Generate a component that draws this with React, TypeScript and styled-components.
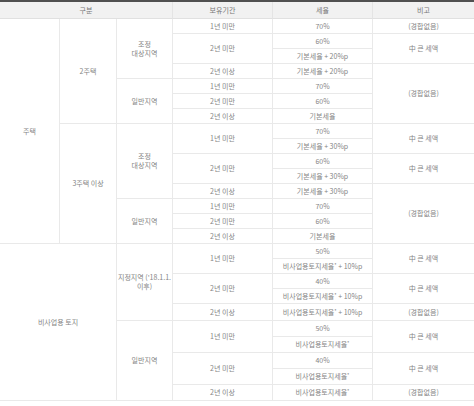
import React from "react";
import styled, { createGlobalStyle } from "styled-components";

const Global = createGlobalStyle`
  html, body { margin: 0; padding: 0; background: #ffffff; }
  body { font-family: "Noto Sans CJK KR", "Noto Sans", sans-serif; }
`;

const Table = styled.table`
  width: 474px;
  border-collapse: separate;
  border-spacing: 0;
  table-layout: fixed;
  border-top: 2px solid #505050;
  font-family: "Noto Sans CJK KR", "Noto Sans", sans-serif;
  font-size: 7px;
  color: #858585;
`;

const Row = styled.tr<{ $h?: number }>`
  height: ${(p) => p.$h ?? 15}px;
`;

const Th = styled.th<{ $first?: boolean }>`
  background: #f1f1f1;
  font-weight: 400;
  color: #777777;
  padding: 0;
  text-align: center;
  vertical-align: middle;
  line-height: 9px;
  border-bottom: 1px solid #e0e0e0;
  border-left: ${(p) => (p.$first ? "none" : "1px solid #e4e4e4")};
`;

const Td = styled.td<{ $first?: boolean }>`
  padding: 0;
  text-align: center;
  vertical-align: middle;
  line-height: 9px;
  white-space: nowrap;
  border-bottom: 1px solid #e9e9e9;
  border-left: ${(p) => (p.$first ? "none" : "1px solid #e9e9e9")};
`;

const Sup = styled.sup`
  font-size: 5px;
  line-height: 0;
  vertical-align: 2px;
`;

const Land = ({ plus }: { plus?: boolean }) => (
  <>
    비사업용토지세율<Sup>*</Sup>
    {plus ? " + 10%p" : ""}
  </>
);

const BIG = "中 큰 세액";
const NONE = "(경합없음)";

export default function App() {
  return (
    <>
      <Global />
      <Table>
        <colgroup>
          <col style={{ width: 59 }} />
          <col style={{ width: 57 }} />
          <col style={{ width: 56 }} />
          <col style={{ width: 100 }} />
          <col style={{ width: 100 }} />
          <col />
        </colgroup>
        <thead>
          <Row $h={17}>
            <Th $first colSpan={3}>구분</Th>
            <Th>보유기간</Th>
            <Th>세율</Th>
            <Th>비고</Th>
          </Row>
        </thead>
        <tbody>
          <Row>
            <Td $first rowSpan={15}>주택</Td>
            <Td rowSpan={7}>2주택</Td>
            <Td rowSpan={4}>조정<br />대상지역</Td>
            <Td>1년 미만</Td>
            <Td>70%</Td>
            <Td>{NONE}</Td>
          </Row>
          <Row>
            <Td rowSpan={2}>2년 미만</Td>
            <Td>60%</Td>
            <Td rowSpan={2}>{BIG}</Td>
          </Row>
          <Row>
            <Td>기본세율 + 20%p</Td>
          </Row>
          <Row>
            <Td>2년 이상</Td>
            <Td>기본세율 + 20%p</Td>
            <Td rowSpan={4}>{NONE}</Td>
          </Row>
          <Row>
            <Td rowSpan={3}>일반지역</Td>
            <Td>1년 미만</Td>
            <Td>70%</Td>
          </Row>
          <Row>
            <Td>2년 미만</Td>
            <Td>60%</Td>
          </Row>
          <Row>
            <Td>2년 이상</Td>
            <Td>기본세율</Td>
          </Row>
          <Row>
            <Td rowSpan={8}>3주택 이상</Td>
            <Td rowSpan={5}>조정<br />대상지역</Td>
            <Td rowSpan={2}>1년 미만</Td>
            <Td>70%</Td>
            <Td rowSpan={2}>{BIG}</Td>
          </Row>
          <Row>
            <Td>기본세율 + 30%p</Td>
          </Row>
          <Row>
            <Td rowSpan={2}>2년 미만</Td>
            <Td>60%</Td>
            <Td rowSpan={2}>{BIG}</Td>
          </Row>
          <Row>
            <Td>기본세율 + 30%p</Td>
          </Row>
          <Row>
            <Td>2년 이상</Td>
            <Td>기본세율 + 30%p</Td>
            <Td rowSpan={4}>{NONE}</Td>
          </Row>
          <Row>
            <Td rowSpan={3}>일반지역</Td>
            <Td>1년 미만</Td>
            <Td>70%</Td>
          </Row>
          <Row>
            <Td>2년 미만</Td>
            <Td>60%</Td>
          </Row>
          <Row>
            <Td>2년 이상</Td>
            <Td>기본세율</Td>
          </Row>
          <Row>
            <Td $first colSpan={2} rowSpan={10}>비사업용 토지</Td>
            <Td rowSpan={5}>지정지역 ('18.1.1.<br />이후)</Td>
            <Td rowSpan={2}>1년 미만</Td>
            <Td>50%</Td>
            <Td rowSpan={2}>{BIG}</Td>
          </Row>
          <Row>
            <Td><Land plus /></Td>
          </Row>
          <Row>
            <Td rowSpan={2}>2년 미만</Td>
            <Td>40%</Td>
            <Td rowSpan={2}>{BIG}</Td>
          </Row>
          <Row>
            <Td><Land plus /></Td>
          </Row>
          <Row $h={17}>
            <Td>2년 이상</Td>
            <Td><Land plus /></Td>
            <Td>{NONE}</Td>
          </Row>
          <Row $h={16}>
            <Td rowSpan={5}>일반지역</Td>
            <Td rowSpan={2}>1년 미만</Td>
            <Td>50%</Td>
            <Td rowSpan={2}>{BIG}</Td>
          </Row>
          <Row $h={16}>
            <Td><Land /></Td>
          </Row>
          <Row $h={16}>
            <Td rowSpan={2}>2년 미만</Td>
            <Td>40%</Td>
            <Td rowSpan={2}>{BIG}</Td>
          </Row>
          <Row $h={16}>
            <Td><Land /></Td>
          </Row>
          <Row $h={16}>
            <Td>2년 이상</Td>
            <Td><Land /></Td>
            <Td>{NONE}</Td>
          </Row>
        </tbody>
      </Table>
    </>
  );
}
